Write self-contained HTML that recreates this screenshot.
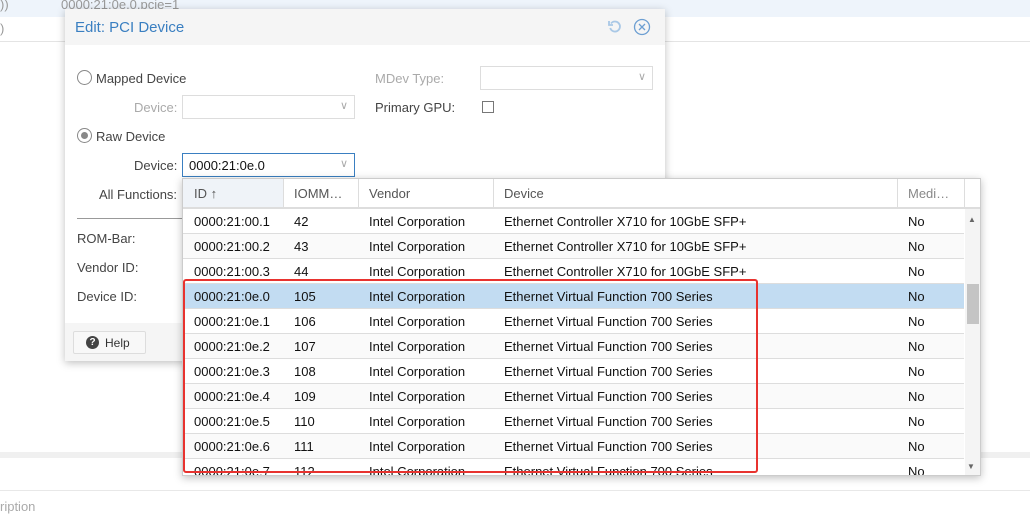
<!DOCTYPE html>
<html><head><style>
*{box-sizing:border-box;margin:0;padding:0}
body{width:1030px;height:518px;overflow:hidden;background:#fff;font-family:"Liberation Sans",sans-serif;font-size:13px;color:#222;position:relative}
.abs{position:absolute}
.lbl{position:absolute;font-size:13px;color:#444}
.dis{color:#aaa}
.sel{position:absolute;border:1px solid #ddd;background:#fff}
.sel .ar{position:absolute;right:6px;top:3px;color:#aaa;font-size:11px}
.grid{position:absolute;left:182px;top:178px;width:799px;height:298px;background:#fff;border:1px solid #ccc;box-shadow:0 2px 8px rgba(0,0,0,.25);overflow:hidden}
.row{position:absolute;left:0;width:781px;height:25px;border-bottom:1px solid #ddd;font-size:13px;color:#111}
.row span,.hd span{position:absolute;top:5px;white-space:nowrap}
.hd{position:absolute;left:0;top:0;width:797px;height:30px;border-bottom:2px solid #ddd;color:#555}
.hd div{position:absolute;top:0;height:28px;border-right:1px solid #ddd}
</style></head><body>
<div class="abs" style="left:0;top:0;width:1030px;height:17px;background:#eef4fb"></div>
<div class="abs" style="left:61px;top:-3px;color:#999;font-size:13px">0000:21:0e.0,pcie=1</div>
<div class="abs" style="left:0;top:-3px;color:#999">))</div>
<div class="abs" style="left:0;top:21px;color:#999">)</div>
<div class="abs" style="left:0;top:41px;width:1030px;height:1px;background:#e4e4e4"></div>
<div class="abs" style="left:0;top:452px;width:1030px;height:6px;background:#f0f0f0"></div>
<div class="abs" style="left:0;top:490px;width:1030px;height:1px;background:#e8e8e8"></div>
<div class="abs" style="left:0;top:499px;color:#aaa">ription</div>

<div class="abs" style="left:65px;top:9px;width:600px;height:352px;background:#fff;box-shadow:0 2px 8px rgba(0,0,0,.25)">
 <div class="abs" style="left:0;top:0;width:600px;height:36px;background:#f5f5f5"></div>
 <div class="abs" style="left:10px;top:10px;color:#3a7fc1;font-size:15px">Edit: PCI Device</div>
 <svg class="abs" style="left:542px;top:10px" width="16" height="16" viewBox="0 0 16 16"><path d="M4 4.5A5 5 0 1 1 3.2 9" fill="none" stroke="#a9c8e6" stroke-width="1.8"/><path d="M2 2v4h4" fill="none" stroke="#a9c8e6" stroke-width="1.8"/></svg>
 <svg class="abs" style="left:568px;top:9px" width="18" height="18" viewBox="0 0 18 18"><circle cx="9" cy="9" r="7.5" fill="none" stroke="#6d9fd2" stroke-width="1.3"/><path d="M6 6l6 6M12 6l-6 6" stroke="#6d9fd2" stroke-width="1.3"/></svg>
 <div class="abs" style="left:0;top:314px;width:600px;height:38px;background:#f5f5f5"></div>
 <div class="abs" style="left:8px;top:322px;width:73px;height:23px;background:#f8f8f8;border:1px solid #ddd;border-radius:2px"></div>
 <div class="abs" style="left:21px;top:327px;width:13px;height:13px;border-radius:50%;background:#444;color:#fff;font-size:10px;font-weight:bold;text-align:center;line-height:13px">?</div>
 <div class="abs" style="left:40px;top:327px;font-size:12px;color:#333">Help</div>
</div>

<div class="abs" style="left:77px;top:70px;width:15px;height:15px;border:1px solid #888;border-radius:50%;background:#fff"></div>
<div class="lbl" style="left:96px;top:71px">Mapped Device</div>
<div class="lbl dis" style="left:375px;top:71px">MDev Type:</div>
<div class="sel" style="left:480px;top:66px;width:173px;height:24px"><span class="ar">&#8744;</span></div>
<div class="lbl dis" style="left:134px;top:100px">Device:</div>
<div class="sel" style="left:182px;top:95px;width:173px;height:24px"><span class="ar">&#8744;</span></div>
<div class="lbl" style="left:375px;top:100px">Primary GPU:</div>
<div class="abs" style="left:482px;top:101px;width:12px;height:12px;border:1px solid #777"></div>
<div class="abs" style="left:77px;top:128px;width:15px;height:15px;border:1px solid #888;border-radius:50%;background:#fff"></div>
<div class="abs" style="left:81px;top:132px;width:7px;height:7px;border-radius:50%;background:#888"></div>
<div class="lbl" style="left:96px;top:129px">Raw Device</div>
<div class="lbl" style="left:134px;top:158px">Device:</div>
<div class="sel" style="left:182px;top:153px;width:173px;height:24px;border-color:#3a7fc1"><span class="abs" style="left:6px;top:4px;color:#111">0000:21:0e.0</span><span class="ar">&#8744;</span></div>
<div class="lbl" style="left:99px;top:187px">All Functions:</div>
<div class="abs" style="left:77px;top:218px;width:110px;height:1px;background:#999"></div>
<div class="lbl" style="left:77px;top:231px">ROM-Bar:</div>
<div class="lbl" style="left:77px;top:260px">Vendor ID:</div>
<div class="lbl" style="left:77px;top:289px">Device ID:</div>

<div class="grid">
 <div class="hd">
  <div style="left:0;width:101px;background:#eff3f8"></div>
  <div style="left:101px;width:75px"></div>
  <div style="left:176px;width:135px"></div>
  <div style="left:311px;width:404px"></div>
  <div style="left:715px;width:67px"></div>
  <span style="left:11px;top:7px">ID &#8593;</span><span style="left:111px;top:7px">IOMM…</span><span style="left:186px;top:7px">Vendor</span><span style="left:321px;top:7px">Device</span><span style="left:725px;top:7px;color:#888">Medi…</span>
 </div>
 <div class="abs" style="left:782px;top:30px;width:16px;height:268px;background:#f4f4f4"></div>
 <div class="abs" style="left:785px;top:36px;color:#666;font-size:8px">&#9650;</div>
 <div class="abs" style="left:784px;top:283px;color:#666;font-size:8px">&#9660;</div>
 <div class="abs" style="left:784px;top:105px;width:12px;height:40px;background:#c4c4c4"></div>
 <div id="rows"></div>
</div>
<div class="abs" style="left:183px;top:279px;width:575px;height:194px;border:2.5px solid #e8332f;border-radius:3px"></div>
<script>
var d=[["0000:21:00.1","42","Ethernet Controller X710 for 10GbE SFP+"],["0000:21:00.2","43","Ethernet Controller X710 for 10GbE SFP+"],["0000:21:00.3","44","Ethernet Controller X710 for 10GbE SFP+"]];
for(var i=0;i<8;i++)d.push(["0000:21:0e."+i,""+(105+i),"Ethernet Virtual Function 700 Series"]);
var h="";d.forEach(function(r,i){var bg=i==3?"#c2dcf2":(i%2?"#fafafa":"#fff");
h+='<div class="row" style="top:'+(30+i*25)+'px;background:'+bg+'"><span style="left:11px">'+r[0]+'</span><span style="left:111px">'+r[1]+'</span><span style="left:186px">Intel Corporation</span><span style="left:321px">'+r[2]+'</span><span style="left:725px">No</span></div>';});
document.getElementById("rows").outerHTML=h;
</script>
</body></html>
